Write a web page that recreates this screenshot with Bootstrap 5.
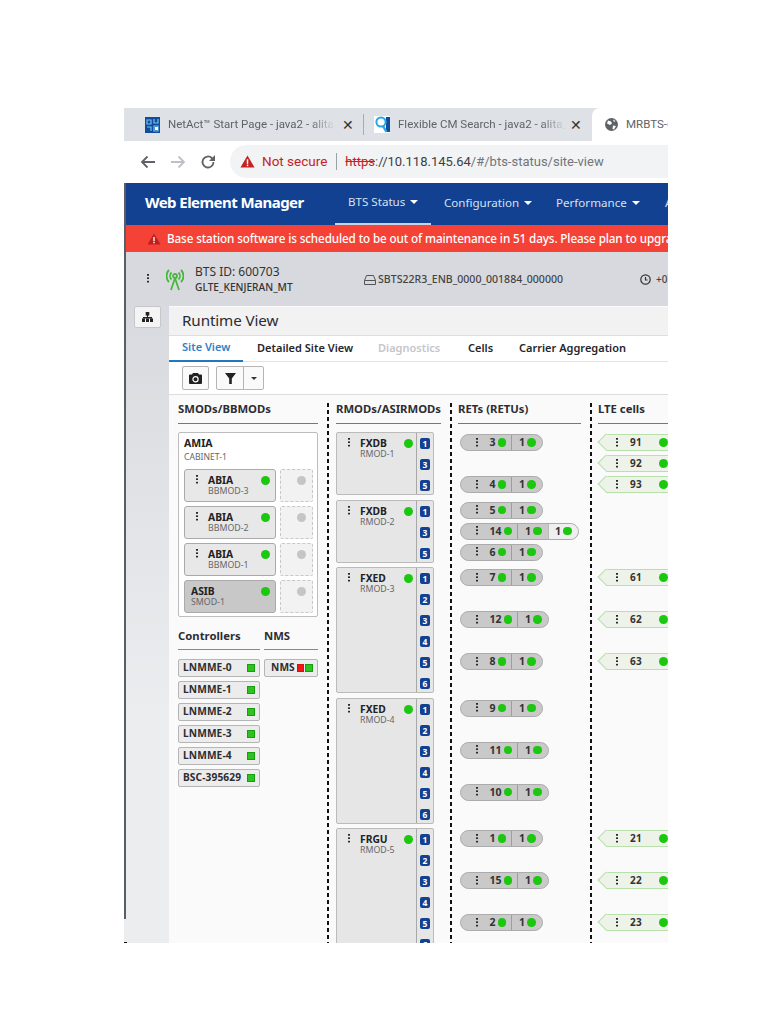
<!DOCTYPE html>
<html lang="en"><head><meta charset="utf-8"><title>Web Element Manager</title>
<link href="https://cdn.jsdelivr.net/npm/bootstrap@5.3.0/dist/css/bootstrap.min.css" rel="stylesheet">
<style>
html,body{background:#fff;margin:0;overflow:hidden}
body{font-family:"Noto Sans","Liberation Sans",sans-serif;color:#222}
.flex-none{flex:none}
.shot{margin:108px 0 0 124px;width:544px;height:835px;overflow:hidden;position:relative}
.tabstrip{height:33px;background:#dee1e6;font-family:Roboto,sans-serif;font-size:11.5px;color:#5f6368}
.ctab{height:33px;flex:none;position:relative;white-space:nowrap}
.ctab-1{width:239px;padding-left:21px}
.ctab-2{width:229px;padding-left:10px;border-left:1px solid #a8abb0;height:21px;margin-top:6px}
.ctab-3{flex:1;background:#fff;border-radius:8px 0 0 0;padding-left:13px}
.ctab-t{display:block;overflow:hidden;-webkit-mask-image:linear-gradient(90deg,#000 85%,transparent);mask-image:linear-gradient(90deg,#000 85%,transparent)}
.ctab-1 .ctab-t{width:167px}.ctab-2 .ctab-t{width:168px}
.ctab-x{font-size:14px;color:#333;line-height:1;margin-left:auto}
.ctab-1 .ctab-x{margin-right:9px}.ctab-2 .ctab-x{margin-right:10px}
.ctoolbar{height:42px;background:#fff;padding:4px 0 5px 16px;font-family:Roboto,sans-serif}
.navic{margin-left:14px}
.omni{flex:1;height:33px;background:#f1f3f4;border-radius:17px 0 0 17px;margin-left:14px;padding-left:10px;font-size:13px;white-space:nowrap}
.omni-tri{color:#c5221f}
.omni-ns{color:#c5221f;font-size:13.5px;margin-left:7px}
.omni-sep{width:1px;height:17px;background:#9aa0a6;margin:0 8px 0 9px}
.omni-s{color:#c5221f;text-decoration:line-through}
.omni-h{color:#3c4043}.omni-p{color:#70757a}
.appx{border-left:2px solid #5a5d63;border-image:linear-gradient(#5a5d63 96.7%,#eceded 0) 1;height:760px;position:relative;background:linear-gradient(#d7d9de 15%,#ecedef 70%)}
.wem-nav{height:42px;background:#124191;padding:0;flex-wrap:nowrap;justify-content:flex-start;color:#fff;white-space:nowrap}
.wem-brand{color:#fff;font-size:15px;font-weight:700;margin:0 32px 0 19px;padding-bottom:4px;letter-spacing:-.55px;width:158px;flex:none}
.wem-item{height:42px;color:#d6e0f2;font-size:11.6px;display:flex;align-items:center;gap:5px;flex:none;padding-bottom:2px}
.wem-i1{width:96px;padding-left:13px;border-bottom:2px solid #c8d2e4}
.wem-i2{margin-left:13px;width:112px}
.wem-i3{width:109px}
.wem-caret{width:0;height:0;border:4px solid transparent;border-top-color:#fff;border-bottom:0}
.redbar{height:27px;background:#f44336;color:#fff;font-size:11.7px;font-weight:500;padding-left:21px;white-space:nowrap;gap:6px;letter-spacing:-.12px}
.redtri{color:#c11d1d}
.infobar{height:54px;padding-left:21px;color:#333;white-space:nowrap}
.infant{margin-left:17px}
.keb{display:inline-block;width:2px;height:10px;flex:none;background:linear-gradient(#26262c 50%,transparent 0) 0 0/2px 3.4px}
.bts{margin-left:11px;line-height:1.2;width:169px;font-size:10.2px;font-weight:500;flex:none}
.bts-id{font-size:12px;font-weight:400;margin-bottom:1px}
.sw{font-size:10.55px;width:276px;margin-top:1px;gap:2px;font-weight:500;color:#444;flex:none}
.clk{font-size:10px;gap:5px;color:#444;font-weight:500;flex:none}
.lower{height:637px}
.sidebar{width:43px;flex:none;padding:0 0 0 8px}
.sbtn{width:27px;height:22px;padding:0;display:flex;align-items:center;justify-content:center;background:#f4f4f4;border:1px solid #c5c7ca;border-radius:2px}
.mainp{flex:1;background:#fafafa;min-width:0;overflow:hidden}
.titlerow{height:29px;background:#f2f2f2;padding:0 0 2px 13px;font-size:15.2px;letter-spacing:-.1px;border-bottom:1px solid #dedede;color:#2b2b33;margin-top:1px}
.sitetabs{height:26px;background:#fff;border-bottom:1px solid #e2e2e2;font-size:11px;font-weight:600;flex-wrap:nowrap;white-space:nowrap}
.stab{height:26px;display:flex;align-items:center;color:#26262c;padding-bottom:2px}
.stab-on{width:74px;padding-left:13px;color:#2b82c9;border-bottom:2px solid #1f78c0}
.stab-2{margin-left:14px;width:121px}.stab-3{width:90px;color:#c4c6c9}.stab-4{width:51px}
.toolrow{height:33px;background:#fff;border-bottom:1px solid #dcdcdc;padding-left:13px;gap:7px}
.tbtn{height:24px;padding:0;display:flex;align-items:center;justify-content:center;background:#fafafa;border:1px solid #b5b5b5;border-radius:2px;--bs-btn-border-radius:2px}
.tb-cam{width:27px}.tb-f{width:28px}.tb-c{width:21px}
.tbcaret{width:0;height:0;border:3px solid transparent;border-top-color:#333;border-bottom:0}
.cols{padding-left:9px;height:549px}
.mcol{flex:none}
.c1{width:140px}.c2{width:105px}.c3{width:123px}.c4{width:90px}
.dash{width:2px;flex:none;margin-top:8px;background:linear-gradient(#111 62%,transparent 0) 0 0/2px 7px}
.d1{margin-left:9px;margin-right:7px}.d2{margin-left:9px;margin-right:6px}.d3{margin-left:9px;margin-right:6px}
.colhd{height:29px;border-bottom:1px solid #777;font-size:11.3px;font-weight:700;color:#2d2d33;padding-top:6px;margin-bottom:8px;white-space:nowrap;line-height:16px}
.amia{height:185px;background:#fff;border:1px solid #bdbdbd;border-radius:2px;padding:4px 4px 0 5px}
.amia-n{font-size:10.5px;font-weight:700;line-height:13px}
.amia-s{font-size:8.6px;color:#666;line-height:14px;margin-bottom:5px}
.modrow{gap:4px;margin-bottom:4px}
.modb{width:92px;height:33px;background:#e8e8e8;border:1px solid #aaa;border-radius:3px;padding:2px 5px 0 0;position:relative}
.modb-d{background:#c8c8c8}
.modb .keb{margin:3px 0 0 11px}
.modtx{margin-left:10px;line-height:1}
.modb-d .modtx{margin-left:6px}
.nm{font-size:10.3px;font-weight:700;line-height:12px;margin-top:2px}
.sb{font-size:8.8px;color:#666;line-height:10px}
.gdot{display:inline-block;flex:none;width:9px;height:9px;border-radius:50%;background:#1bc70f}
.modb .gdot{margin-left:auto;margin-top:4px}
.slotb{width:33px;height:33px;border:1px dashed #c8c8c8;background:#f2f2f2;border-radius:2px;display:flex;justify-content:flex-end;padding:6px 6px 0 0}
.slotb i{width:9px;height:9px;border-radius:50%;background:#c5c5c5;display:block}
.sec2{margin-top:11px;gap:4px}
.sec2 .colhd{height:22px;padding-top:0;border-bottom:1.5px solid #888;margin-bottom:9px}
.ctl{width:82px}.nmsc{width:54px}
.ctlb{width:82px;height:18px;margin-bottom:4px;background:#ececec;border:1px solid #b5b5b5;border-radius:2px;font-size:10.2px;font-weight:700;padding:0 4px;letter-spacing:.1px;color:#2d2d33;white-space:nowrap}
.nmsb{width:54px;padding:0 4px 0 6px}
.led{width:8px;height:8px;display:block;background:#2cc31e;border:1px solid #1a9c12;flex:none;margin-left:auto}
.led-r{width:7px;background:#f01616;border-color:#d30f0f;margin-left:auto;margin-right:1px}
.led-r+.led{margin-left:0}
.grp{margin-bottom:4.5px}
.g3{height:63px}.g6{height:126px}
.slot{height:21px;display:flex;align-items:center}
.rbox{width:98px;background:#e6e6e6;border:1px solid #bbb;border-radius:2px;position:relative;overflow:hidden}
.rinfo{flex:1;padding:2px 3px 0 11px;min-width:0}
.rinfo .keb{margin-top:3px}
.rinfo .modtx{margin-left:10px}
.rinfo .gdot{margin-left:auto;margin-top:4px;width:9px;height:9px}
.ports{width:17px;border-left:1px solid #a8a8a8;flex:none}
.port{height:21px;display:flex;align-items:center;justify-content:center}
.port b{display:block;width:10px;height:11px;background:#124191;border-radius:2px;color:#fff;font-size:8.5px;line-height:11px;text-align:center;font-weight:700}
.pill{height:17px;display:flex;align-items:stretch;margin-left:2px;border:1px solid #ababab;border-radius:9px;background:#c9c9c9;font-size:10.5px;font-weight:700;color:#333;line-height:15px}
.pa{display:flex;align-items:center;padding-left:15px;border-right:1px solid #9d9d9d;width:51px}
.pa-w{width:57px}
.pa .n{margin-left:auto;margin-right:2px}
.pa .gdot{margin-right:5px}
.pb{display:flex;align-items:center;padding-left:7px;gap:2px;width:30px}
.pc{display:flex;align-items:center;padding-left:6px;gap:2px;background:#efefef;border-left:1px solid #bbb;border-radius:0 9px 9px 0;width:30px}
.pill .gdot{width:8.5px;height:8.5px}
.lte{height:17px;margin-left:8px;width:90px;background:#eef3ea;border:1.5px solid #b8e0ab;border-left:0;position:relative;display:flex;align-items:center;font-size:10px;font-weight:700;color:#333;padding-left:10px}
.lte::before{content:"";position:absolute;left:-6px;top:1px;width:12px;height:12px;transform:rotate(45deg);background:#eef3ea;border-left:1.5px solid #b8e0ab;border-bottom:1.5px solid #b8e0ab}
.lte .keb{position:relative}
.lte .n{margin-left:12px;width:27px;letter-spacing:.3px}
.lte .gdot{margin-left:2px}
.blackmark{position:absolute;left:0;bottom:0;width:3px;height:1px;background:#111}
</style></head><body>
<svg width="0" height="0" class="position-absolute"><defs>
<symbol id="tri" viewBox="0 0 16 14"><path d="M8 .5 15.6 13.500H.4Z" fill="currentColor"/><rect x="7.200" y="4.600" width="1.600" height="5" fill="#fff"/><rect x="7.200" y="10.400" width="1.600" height="1.600" fill="#fff"/></symbol>
</defs></svg>
<div class="shot">
 <div class="tabstrip d-flex">
  <div class="ctab ctab-1 d-flex align-items-center">
   <svg width="15" height="16" viewBox="0 0 15 16" class="me-2 flex-none"><rect width="15" height="16" fill="#124a9c"/><path d="M2 3h4v4H2zM9 2v4h4V2M2 10h4v4M9 9h4v5H9z" fill="none" stroke="#6fc3ee" stroke-width="1.200"/><rect x="10" y="10" width="3" height="3" fill="#fff"/></svg>
   <span class="ctab-t">NetAct™ Start Page - java2 - alita</span><span class="ctab-x">✕</span>
  </div>
  <div class="ctab ctab-2 d-flex align-items-center">
   <svg width="16" height="17" viewBox="0 0 16 17" class="me-2 flex-none"><rect width="16" height="17" fill="#fff"/><rect x="12" y="1" width="4" height="15" fill="#124a9c"/><circle cx="7" cy="6" r="4.600" fill="none" stroke="#25a7e5" stroke-width="2"/><path d="m9 10 3.500 6" stroke="#25a7e5" stroke-width="2.400"/></svg>
   <span class="ctab-t">Flexible CM Search - java2 - alita_</span><span class="ctab-x">✕</span>
  </div>
  <div class="ctab ctab-3 d-flex align-items-center">
   <svg width="13" height="13" viewBox="0 0 13 13" class="me-2 flex-none"><circle cx="6.500" cy="6.500" r="6.500" fill="#5f6368"/><path d="M3 2.500 6 3.500 7 5.500 5 7 2 5.500ZM8 7.500 11 8 9 11.500 7.500 11Z M8 1.500 10.500 3 9 4Z" fill="#fff"/></svg>
   <span>MRBTS-6</span>
  </div>
 </div>
 <div class="ctoolbar d-flex align-items-center">
  <svg width="16" height="14" viewBox="0 0 16 14" class="flex-none"><path d="M15 7H2M7.500 1.500 2 7l5.500 5.500" fill="none" stroke="#5f6368" stroke-width="1.800"/></svg>
  <svg width="16" height="14" viewBox="0 0 16 14" class="flex-none navic"><path d="M1 7h13M8.500 1.500 14 7l-5.500 5.500" fill="none" stroke="#bdc1c6" stroke-width="1.800"/></svg>
  <svg width="16" height="16" viewBox="0 0 16 16" class="flex-none navic"><path d="M13.500 8a5.500 5.500 0 1 1-1.700-4L14 6" fill="none" stroke="#5f6368" stroke-width="1.800"/><path d="M15 1v6H9z" fill="#5f6368"/></svg>
  <div class="omni d-flex align-items-center">
   <svg width="15" height="13" class="flex-none omni-tri"><use href="#tri"/></svg>
   <span class="omni-ns">Not secure</span><span class="omni-sep"></span>
   <span><span class="omni-s">https</span><span class="omni-p">:</span><span class="omni-h">//10.118.145.64</span><span class="omni-p">/#/bts-status/site-view</span></span>
  </div>
 </div>
 <div class="appx">
  <nav class="navbar wem-nav">
   <span class="wem-brand">Web Element Manager</span>
   <a class="wem-item wem-i1 text-decoration-none">BTS Status <span class="wem-caret"></span></a>
   <a class="wem-item wem-i2 text-decoration-none">Configuration <span class="wem-caret"></span></a>
   <a class="wem-item wem-i3 text-decoration-none">Performance <span class="wem-caret"></span></a>
   <a class="wem-item text-decoration-none">A</a>
  </nav>
  <div class="redbar d-flex align-items-center">
   <svg width="14" height="12" class="flex-none redtri"><use href="#tri"/></svg>
   <span>Base station software is scheduled to be out of maintenance in 51 days. Please plan to upgrade</span>
  </div>
  <div class="infobar d-flex align-items-center">
   <span class="keb"></span>
   <svg width="18" height="24" viewBox="0 0 18 24" class="infant flex-none" fill="none" stroke="#46b83c" stroke-width="1.800"><circle cx="9" cy="9" r="2"/><path d="M5.500 12.500a5 5 0 0 1 0-7M12.500 5.500a5 5 0 0 1 0 7M3 15a8.500 8.500 0 0 1 0-12M15 3a8.500 8.500 0 0 1 0 12M9 11l-4 12M9 11l4 12"/></svg>
   <div class="bts"><div class="bts-id">BTS ID: 600703</div><div>GLTE_KENJERAN_MT</div></div>
   <div class="sw d-flex align-items-center">
    <svg width="12" height="10" viewBox="0 0 12 10" fill="none" stroke="#555" class="flex-none"><path d="M2.500.5h7l2 5v4H.5v-4Zm-2 5h11"/></svg><span>SBTS22R3_ENB_0000_001884_000000</span>
   </div>
   <div class="clk d-flex align-items-center">
    <svg width="11" height="11" viewBox="0 0 11 11" fill="none" stroke="#333" stroke-width="1.200" class="flex-none"><circle cx="5.500" cy="5.500" r="4.700"/><path d="M5.500 3v3h2"/></svg><span>+07:00</span>
   </div>
  </div>
  <div class="lower d-flex">
   <div class="sidebar">
    <button class="btn sbtn" type="button" aria-label="Site map"><svg width="11" height="10" viewBox="0 0 11 10" fill="#222"><rect x="3.700" width="3.600" height="3.600"/><rect y="6.400" width="3" height="3.600"/><rect x="4" y="6.400" width="3" height="3.600"/><rect x="8" y="6.400" width="3" height="3.600"/><path d="M1 5h9v1.400H1zM5 3h1v3H5z"/></svg></button>
   </div>
   <div class="mainp">
    <div class="titlerow d-flex align-items-center">Runtime View</div>
    <div class="nav sitetabs">
     <a class="stab stab-on text-decoration-none">Site View</a>
     <a class="stab stab-2 text-decoration-none">Detailed Site View</a>
     <a class="stab stab-3 text-decoration-none">Diagnostics</a>
     <a class="stab stab-4 text-decoration-none">Cells</a>
     <a class="stab text-decoration-none">Carrier Aggregation</a>
    </div>
    <div class="toolrow d-flex align-items-center">
     <button class="btn tbtn tb-cam" type="button" aria-label="Snapshot"><svg width="13" height="11" viewBox="0 0 13 11"><path d="M4 0h5l1 1.600h2a1 1 0 0 1 1 1V10a1 1 0 0 1-1 1H1a1 1 0 0 1-1-1V2.600a1 1 0 0 1 1-1h2Z" fill="#222"/><circle cx="6.500" cy="6.200" r="2.600" fill="none" stroke="#fff" stroke-width="1.200"/></svg></button>
     <div class="btn-group">
      <button class="btn tbtn tb-f" type="button" aria-label="Filter"><svg width="11" height="11" viewBox="0 0 11 11"><path d="M0 0h11L6.800 5.500V11H4.200V5.500Z" fill="#222"/></svg></button>
      <button class="btn tbtn tb-c" type="button" aria-label="More"><span class="tbcaret"></span></button>
     </div>
    </div>
    <div class="cols d-flex">
     <div class="mcol c1">
      <div class="colhd">SMODs/BBMODs</div>
      <div class="amia">
       <div class="amia-n">AMIA</div><div class="amia-s">CABINET-1</div>
       <div class="modrow d-flex"><div class="modb d-flex"><span class="keb"></span><div class="modtx"><div class="nm">ABIA</div><div class="sb">BBMOD-3</div></div><span class="gdot"></span></div><div class="slotb"><i></i></div></div>
       <div class="modrow d-flex"><div class="modb d-flex"><span class="keb"></span><div class="modtx"><div class="nm">ABIA</div><div class="sb">BBMOD-2</div></div><span class="gdot"></span></div><div class="slotb"><i></i></div></div>
       <div class="modrow d-flex"><div class="modb d-flex"><span class="keb"></span><div class="modtx"><div class="nm">ABIA</div><div class="sb">BBMOD-1</div></div><span class="gdot"></span></div><div class="slotb"><i></i></div></div>
       <div class="modrow d-flex"><div class="modb modb-d d-flex"><div class="modtx"><div class="nm">ASIB</div><div class="sb">SMOD-1</div></div><span class="gdot"></span></div><div class="slotb"><i></i></div></div>
      </div>
      <div class="sec2 d-flex">
       <div class="ctl">
        <div class="colhd">Controllers</div>
        <div class="ctlb d-flex align-items-center">LNMME-0<span class="led"></span></div>
        <div class="ctlb d-flex align-items-center">LNMME-1<span class="led"></span></div>
        <div class="ctlb d-flex align-items-center">LNMME-2<span class="led"></span></div>
        <div class="ctlb d-flex align-items-center">LNMME-3<span class="led"></span></div>
        <div class="ctlb d-flex align-items-center">LNMME-4<span class="led"></span></div>
        <div class="ctlb d-flex align-items-center">BSC-395629<span class="led"></span></div>
       </div>
       <div class="nmsc">
        <div class="colhd">NMS</div>
        <div class="ctlb nmsb d-flex align-items-center">NMS<span class="led led-r"></span><span class="led"></span></div>
       </div>
      </div>
     </div>
     <div class="dash d1"></div>
     <div class="mcol c2">
      <div class="colhd">RMODs/ASIRMODs</div>
      <div class="grp g3 rbox d-flex"><div class="rinfo d-flex"><span class="keb"></span><div class="modtx"><div class="nm">FXDB</div><div class="sb">RMOD-1</div></div><span class="gdot"></span></div><div class="ports"><div class="port"><b>1</b></div><div class="port"><b>3</b></div><div class="port"><b>5</b></div></div></div>
      <div class="grp g3 rbox d-flex"><div class="rinfo d-flex"><span class="keb"></span><div class="modtx"><div class="nm">FXDB</div><div class="sb">RMOD-2</div></div><span class="gdot"></span></div><div class="ports"><div class="port"><b>1</b></div><div class="port"><b>3</b></div><div class="port"><b>5</b></div></div></div>
      <div class="grp g6 rbox d-flex"><div class="rinfo d-flex"><span class="keb"></span><div class="modtx"><div class="nm">FXED</div><div class="sb">RMOD-3</div></div><span class="gdot"></span></div><div class="ports"><div class="port"><b>1</b></div><div class="port"><b>2</b></div><div class="port"><b>3</b></div><div class="port"><b>4</b></div><div class="port"><b>5</b></div><div class="port"><b>6</b></div></div></div>
      <div class="grp g6 rbox d-flex"><div class="rinfo d-flex"><span class="keb"></span><div class="modtx"><div class="nm">FXED</div><div class="sb">RMOD-4</div></div><span class="gdot"></span></div><div class="ports"><div class="port"><b>1</b></div><div class="port"><b>2</b></div><div class="port"><b>3</b></div><div class="port"><b>4</b></div><div class="port"><b>5</b></div><div class="port"><b>6</b></div></div></div>
      <div class="grp g6 rbox d-flex"><div class="rinfo d-flex"><span class="keb"></span><div class="modtx"><div class="nm">FRGU</div><div class="sb">RMOD-5</div></div><span class="gdot"></span></div><div class="ports"><div class="port"><b>1</b></div><div class="port"><b>2</b></div><div class="port"><b>3</b></div><div class="port"><b>4</b></div><div class="port"><b>5</b></div><div class="port"><b>6</b></div></div></div>
     </div>
     <div class="dash d2"></div>
     <div class="mcol c3">
      <div class="colhd">RETs (RETUs)</div>
      <div class="grp g3">
       <div class="slot"><div class="pill"><div class="pa"><span class="keb"></span><span class="n">3</span><span class="gdot"></span></div><div class="pb">1<span class="gdot"></span></div></div></div>
       <div class="slot"></div>
       <div class="slot"><div class="pill"><div class="pa"><span class="keb"></span><span class="n">4</span><span class="gdot"></span></div><div class="pb">1<span class="gdot"></span></div></div></div>
      </div>
      <div class="grp g3">
       <div class="slot"><div class="pill"><div class="pa"><span class="keb"></span><span class="n">5</span><span class="gdot"></span></div><div class="pb">1<span class="gdot"></span></div></div></div>
       <div class="slot"><div class="pill"><div class="pa pa-w"><span class="keb"></span><span class="n">14</span><span class="gdot"></span></div><div class="pb">1<span class="gdot"></span></div><div class="pc">1<span class="gdot"></span></div></div></div>
       <div class="slot"><div class="pill"><div class="pa"><span class="keb"></span><span class="n">6</span><span class="gdot"></span></div><div class="pb">1<span class="gdot"></span></div></div></div>
      </div>
      <div class="grp g6">
       <div class="slot"><div class="pill"><div class="pa"><span class="keb"></span><span class="n">7</span><span class="gdot"></span></div><div class="pb">1<span class="gdot"></span></div></div></div>
       <div class="slot"></div>
       <div class="slot"><div class="pill"><div class="pa pa-w"><span class="keb"></span><span class="n">12</span><span class="gdot"></span></div><div class="pb">1<span class="gdot"></span></div></div></div>
       <div class="slot"></div>
       <div class="slot"><div class="pill"><div class="pa"><span class="keb"></span><span class="n">8</span><span class="gdot"></span></div><div class="pb">1<span class="gdot"></span></div></div></div>
      </div>
      <div class="grp g6">
       <div class="slot"><div class="pill"><div class="pa"><span class="keb"></span><span class="n">9</span><span class="gdot"></span></div><div class="pb">1<span class="gdot"></span></div></div></div>
       <div class="slot"></div>
       <div class="slot"><div class="pill"><div class="pa pa-w"><span class="keb"></span><span class="n">11</span><span class="gdot"></span></div><div class="pb">1<span class="gdot"></span></div></div></div>
       <div class="slot"></div>
       <div class="slot"><div class="pill"><div class="pa pa-w"><span class="keb"></span><span class="n">10</span><span class="gdot"></span></div><div class="pb">1<span class="gdot"></span></div></div></div>
      </div>
      <div class="grp g6">
       <div class="slot"><div class="pill"><div class="pa"><span class="keb"></span><span class="n">1</span><span class="gdot"></span></div><div class="pb">1<span class="gdot"></span></div></div></div>
       <div class="slot"></div>
       <div class="slot"><div class="pill"><div class="pa pa-w"><span class="keb"></span><span class="n">15</span><span class="gdot"></span></div><div class="pb">1<span class="gdot"></span></div></div></div>
       <div class="slot"></div>
       <div class="slot"><div class="pill"><div class="pa"><span class="keb"></span><span class="n">2</span><span class="gdot"></span></div><div class="pb">1<span class="gdot"></span></div></div></div>
      </div>
     </div>
     <div class="dash d3"></div>
     <div class="mcol c4">
      <div class="colhd">LTE cells</div>
      <div class="grp g3">
       <div class="slot"><div class="lte"><span class="keb"></span><span class="n">91</span><span class="gdot"></span></div></div>
       <div class="slot"><div class="lte"><span class="keb"></span><span class="n">92</span><span class="gdot"></span></div></div>
       <div class="slot"><div class="lte"><span class="keb"></span><span class="n">93</span><span class="gdot"></span></div></div>
      </div>
      <div class="grp g3"></div>
      <div class="grp g6">
       <div class="slot"><div class="lte"><span class="keb"></span><span class="n">61</span><span class="gdot"></span></div></div>
       <div class="slot"></div>
       <div class="slot"><div class="lte"><span class="keb"></span><span class="n">62</span><span class="gdot"></span></div></div>
       <div class="slot"></div>
       <div class="slot"><div class="lte"><span class="keb"></span><span class="n">63</span><span class="gdot"></span></div></div>
      </div>
      <div class="grp g6"></div>
      <div class="grp g6">
       <div class="slot"><div class="lte"><span class="keb"></span><span class="n">21</span><span class="gdot"></span></div></div>
       <div class="slot"></div>
       <div class="slot"><div class="lte"><span class="keb"></span><span class="n">22</span><span class="gdot"></span></div></div>
       <div class="slot"></div>
       <div class="slot"><div class="lte"><span class="keb"></span><span class="n">23</span><span class="gdot"></span></div></div>
      </div>
     </div>
    </div>
   </div>
  </div>
 </div>
 <div class="blackmark"></div>
</div>
<script src="https://cdn.jsdelivr.net/npm/bootstrap@5.3.0/dist/js/bootstrap.bundle.min.js"></script>
</body></html>
